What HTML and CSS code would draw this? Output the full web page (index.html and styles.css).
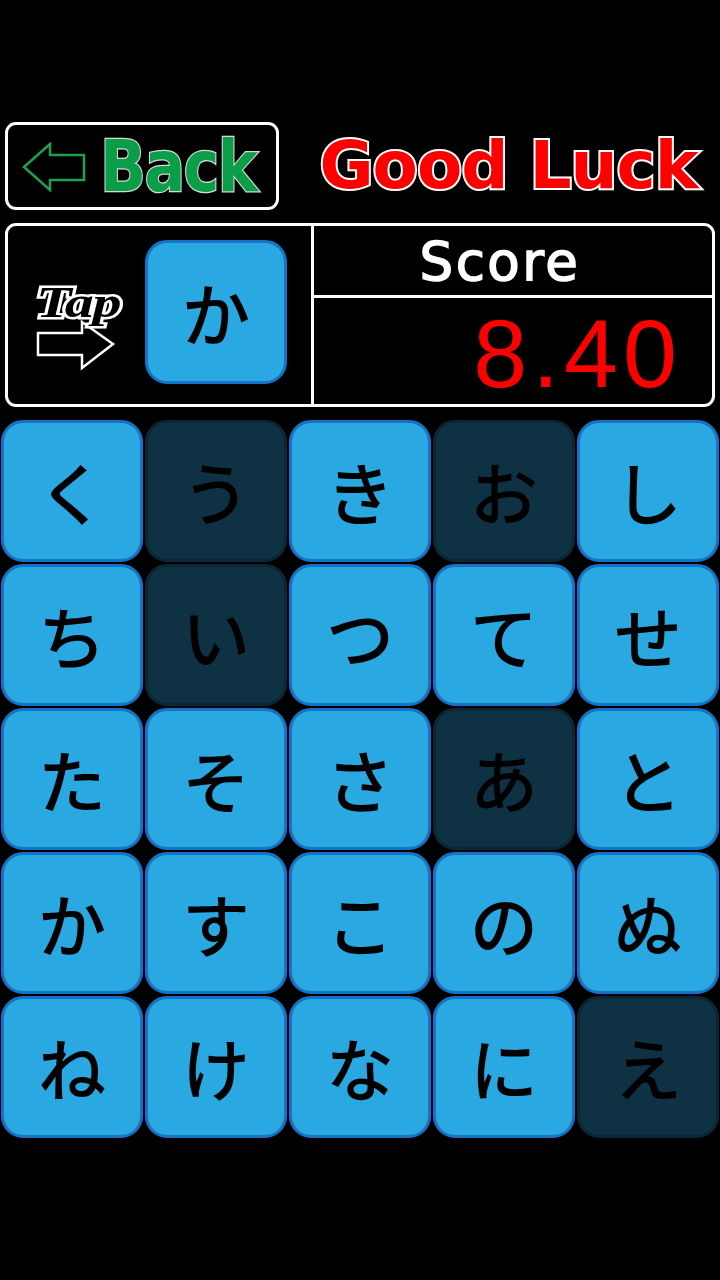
FILE: index.html
```html
<!DOCTYPE html>
<html lang="ja">
<head>
<meta charset="utf-8">
<link rel="stylesheet" href="styles.css">
</head>
<body>
<div class="screen">
  <div class="header">
    <div class="back">
      <svg class="back-arrow" width="64" height="50" viewBox="0 0 64 50">
        <polygon points="2,25 28,2 28,13 62,13 62,38 28,38 28,48" fill="none" stroke="#1fa050" stroke-width="2.5" stroke-linejoin="miter"/>
      </svg>
      <span class="back-text">Back</span>
    </div>
    <div class="luck">Good Luck</div>
  </div>
  <div class="panel">
    <div class="target">
      <div class="tap">
        <span class="tap-text">Tap</span>
        <svg class="tap-arrow" width="80" height="52" viewBox="0 0 80 52">
          <polygon points="2,13 46,13 46,2 77,24 46,48 46,35 2,35" fill="#000" stroke="#fff" stroke-width="2.5"/>
        </svg>
      </div>
      <div class="tile target-tile">か</div>
    </div>
    <div class="score">
      <div class="score-label">Score</div>
      <div class="score-value">8.40</div>
    </div>
  </div>
  <div class="grid">
    <div class="tile">く</div>
    <div class="tile dark">う</div>
    <div class="tile">き</div>
    <div class="tile dark">お</div>
    <div class="tile">し</div>
    <div class="tile">ち</div>
    <div class="tile dark">い</div>
    <div class="tile">つ</div>
    <div class="tile">て</div>
    <div class="tile">せ</div>
    <div class="tile">た</div>
    <div class="tile">そ</div>
    <div class="tile">さ</div>
    <div class="tile dark">あ</div>
    <div class="tile">と</div>
    <div class="tile">か</div>
    <div class="tile">す</div>
    <div class="tile">こ</div>
    <div class="tile">の</div>
    <div class="tile">ぬ</div>
    <div class="tile">ね</div>
    <div class="tile">け</div>
    <div class="tile">な</div>
    <div class="tile">に</div>
    <div class="tile dark">え</div>
  </div>
</div>
</body>
</html>
```
FILE: styles.css
```css
html, body {
  margin: 0;
  padding: 0;
  background: #000;
}
.screen {
  width: 720px;
  height: 1280px;
  padding-top: 122px;
  box-sizing: border-box;
  font-family: "Liberation Sans", "Noto Sans CJK JP", sans-serif;
}
.header {
  display: flex;
  align-items: center;
  height: 88px;
  padding-left: 5px;
}
.back {
  box-sizing: border-box;
  flex: 0 0 274px;
  height: 88px;
  border: 3px solid #fff;
  border-radius: 11px;
  display: flex;
  align-items: center;
  padding-left: 14px;
  gap: 14px;
  overflow: hidden;
}
.back-arrow {
  display: block;
  flex-shrink: 0;
  margin-top: 2px;
}
.back-text {
  flex-shrink: 0;
  font-family: "DejaVu Sans", sans-serif;
  font-weight: bold;
  font-size: 72px;
  letter-spacing: -2px;
  color: #0a9e48;
  -webkit-text-stroke: 2.5px #d8d8d8;
  paint-order: stroke fill;
  line-height: 1;
  transform: scaleX(0.84);
  transform-origin: left center;
}
.luck {
  flex: 1;
  text-align: center;
  padding-left: 18px;
  font-family: "DejaVu Sans", sans-serif;
  font-weight: bold;
  font-size: 66px;
  letter-spacing: -1px;
  color: #ff0000;
  -webkit-text-stroke: 4px #fff;
  paint-order: stroke fill;
  line-height: 1;
}
.panel {
  box-sizing: border-box;
  margin: 13px 5px 0 5px;
  width: 710px;
  height: 184px;
  border: 3px solid #fff;
  border-radius: 11px;
  display: flex;
}
.target {
  box-sizing: border-box;
  width: 306px;
  border-right: 3px solid #fff;
  display: flex;
  align-items: center;
  padding-left: 28px;
  gap: 27px;
}
.tap {
  width: 82px;
  display: flex;
  flex-direction: column;
  align-items: flex-start;
  margin-top: 26px;
}
.tap-text {
  display: block;
  font-family: "Liberation Serif", serif;
  font-weight: bold;
  font-style: italic;
  font-size: 44px;
  line-height: 38px;
  color: #000;
  -webkit-text-stroke: 5px #fff;
  paint-order: stroke fill;
  letter-spacing: -1px;
  transform: scaleX(1.32);
  transform-origin: left center;
}
.tap-arrow {
  display: block;
  margin-top: -2px;
}
.target-tile {
  width: 142px;
  height: 144px;
  margin-bottom: 6px;
}
.score {
  flex: 1;
  display: flex;
  flex-direction: column;
}
.score-label {
  box-sizing: border-box;
  height: 72px;
  border-bottom: 3px solid #fff;
  display: flex;
  align-items: center;
  justify-content: center;
  padding-right: 26px;
  font-family: "DejaVu Sans", sans-serif;
  font-size: 53px;
  letter-spacing: 2.5px;
  color: #fff;
  -webkit-text-stroke: 1.5px #fff;
  line-height: 1;
  padding-top: 2px;
}
.score-value {
  flex: 1;
  display: flex;
  align-items: center;
  justify-content: flex-end;
  padding-right: 30px;
  font-size: 97px;
  letter-spacing: 5px;
  color: #ff0000;
  line-height: 1;
  padding-top: 4px;
}
.grid {
  margin-top: 13px;
  padding: 0 1px;
  display: grid;
  grid-template-columns: repeat(5, 1fr);
  grid-auto-rows: 142px;
  gap: 2px;
}
.tile {
  box-sizing: border-box;
  background: #29a8e2;
  border: 3px solid #1672c6;
  border-radius: 22px;
  display: flex;
  align-items: center;
  justify-content: center;
  font-family: "Noto Sans CJK JP", sans-serif;
  font-weight: 500;
  font-size: 68px;
  color: #000;
  line-height: 1;
}
.tile.dark {
  background: #0e3243;
  border-color: #0a2738;
}
```
